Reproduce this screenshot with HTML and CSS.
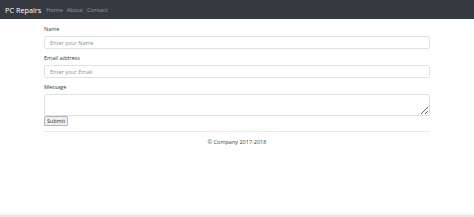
FILE: index.html
```
<!DOCTYPE html>
<html lang="en">
<head>
  <meta charset="UTF-8">
  <meta name="viewport" content="width=device-width, initial-scale=1.0">
  <title>PC Repairs</title>
  <link rel="stylesheet" href="styles.css">
</head>
<body>
  <nav class="navbar">
    <a class="brand" href="#">PC Repairs</a>
    <a class="nav-link" href="#">Home</a>
    <a class="nav-link" href="#">About</a>
    <a class="nav-link" href="#">Contact</a>
  </nav>

  <div class="container">
    <form class="contact-form">
      <div class="form-group">
        <label for="name">Name</label>
        <input type="text" id="name" placeholder="Enter your Name">
      </div>
      <div class="form-group">
        <label for="email">Email address</label>
        <input type="email" id="email" placeholder="Enter your Email">
      </div>
      <div class="form-group last">
        <label for="message">Message</label>
        <textarea id="message"></textarea>
      </div>
      <button type="submit" class="submit-btn">Submit</button>
    </form>
    <hr>
    <footer class="footer">&copy; Company 2017-2018</footer>
  </div>

  <div class="bottom-bar"></div>
</body>
</html>
```
FILE: styles.css
```
body {
  margin: 0;
  font-family: "Open Sans", "Noto Sans", sans-serif;
  font-size: 5.5px;
  color: #3a3f44;
  background: #fff;
  height: 217px;
  display: flex;
  flex-direction: column;
}

.navbar {
  height: 19px;
  background-color: #343a40;
  display: flex;
  align-items: center;
  padding: 0 5px;
}

.brand {
  color: #fff;
  font-size: 7.3px;
  text-decoration: none;
  margin-right: 5px;
}

.nav-link {
  color: #9a9da1;
  font-size: 5.8px;
  text-decoration: none;
  margin-right: 4px;
}

.container {
  width: 386px;
  margin: 0 auto;
  padding-top: 6px;
  flex: 1;
}

.form-group {
  display: flex;
  flex-direction: column;
  margin-bottom: 5px;
}

.form-group.last {
  margin-bottom: 0;
}

.form-group label {
  margin-bottom: 3px;
  line-height: 8px;
}

.form-group input,
.form-group textarea {
  box-sizing: border-box;
  width: 100%;
  border: 1px solid #dfe2e5;
  border-radius: 2px;
  font-family: inherit;
  font-size: 5.5px;
  padding: 0 5px;
  color: #495057;
}

.form-group input {
  height: 13px;
}

.form-group textarea {
  height: 22px;
  resize: vertical;
}

.form-group input::placeholder {
  color: #8a9097;
}

.submit-btn {
  height: 10px;
  padding: 0 2px;
  font-family: inherit;
  font-size: 5.5px;
  line-height: 8px;
  background: #efefef;
  border: 1px solid #b5b5b5;
  border-radius: 1px;
  color: #333;
}

hr {
  border: 0;
  border-top: 1px solid #eaeaea;
  margin: 5px 0 6px;
}

.footer {
  text-align: center;
  line-height: 9px;
}

.bottom-bar {
  height: 2px;
  background: #e6e6e6;
  border-top: 2px solid #f7f7f7;
}
```
